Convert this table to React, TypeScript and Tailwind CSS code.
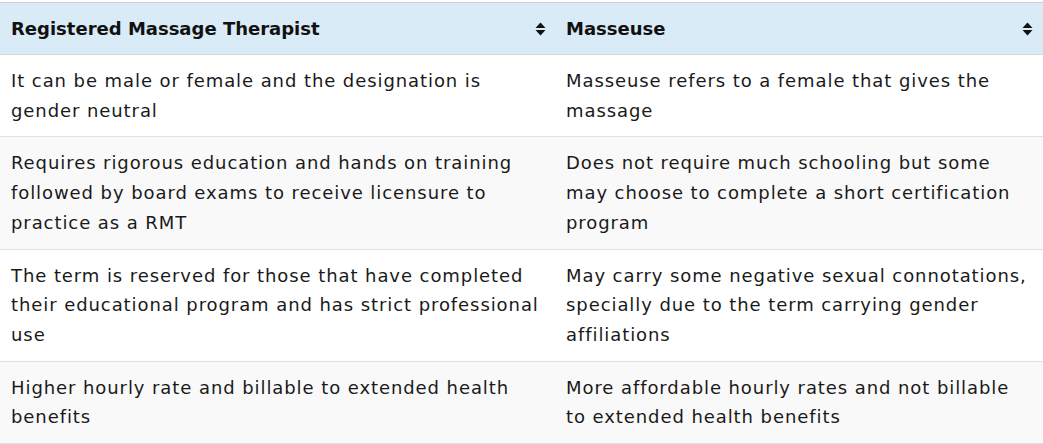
import React from "react";

const rows: [string[], string[]][] = [
  [
    ["It can be male or female and the designation is", "gender neutral"],
    ["Masseuse refers to a female that gives the", "massage"],
  ],
  [
    [
      "Requires rigorous education and hands on training",
      "followed by board exams to receive licensure to",
      "practice as a RMT",
    ],
    [
      "Does not require much schooling but some",
      "may choose to complete a short certification",
      "program",
    ],
  ],
  [
    [
      "The term is reserved for those that have completed",
      "their educational program and has strict professional",
      "use",
    ],
    [
      "May carry some negative sexual connotations,",
      "specially due to the term carrying gender",
      "affiliations",
    ],
  ],
  [
    ["Higher hourly rate and billable to extended health", "benefits"],
    ["More affordable hourly rates and not billable", "to extended health benefits"],
  ],
];

function SortIcon() {
  return (
    <svg width="11" height="14" viewBox="0 0 11 14" className="shrink-0">
      <path d="M5.5 0.5 L10.5 6 L0.5 6 Z" fill="#111" />
      <path d="M5.5 13.5 L10.5 8 L0.5 8 Z" fill="#111" />
    </svg>
  );
}

function Cell({ lines }: { lines: string[] }) {
  return (
    <div className="pl-[11px] pr-[4px] py-[11px] text-[18px] leading-[29.7px] tracking-[0.92px] text-[#1a1a1a] whitespace-nowrap overflow-hidden">
      {lines.map((l, i) => (
        <React.Fragment key={i}>
          {l}
          {i < lines.length - 1 && <br />}
        </React.Fragment>
      ))}
    </div>
  );
}

export default function App() {
  return (
    <div
      className="w-[1043px] h-[444px] overflow-hidden bg-white pt-[2px] text-[#111]"
      style={{ fontFamily: '"DejaVu Sans", "Open Sans", sans-serif' }}
    >
      <div className="border-t border-[#cfcfcf]">
        <div className="grid grid-cols-[555px_1fr] bg-[#d9ebf6] border-b border-[#d6d6d6] h-[52px]">
          <div className="flex items-center justify-between pl-[11px] pr-[9px]">
            <span className="text-[18px] font-bold">Registered Massage Therapist</span>
            <SortIcon />
          </div>
          <div className="flex items-center justify-between pl-[11px] pr-[10px]">
            <span className="text-[18px] font-bold">Masseuse</span>
            <SortIcon />
          </div>
        </div>
        {rows.map((r, i) => (
          <div
            key={i}
            className={`grid grid-cols-[555px_1fr] border-b border-[#e0e0e0] ${i % 2 === 1 ? "bg-[#f9f9f9]" : "bg-white"}`}
          >
            <Cell lines={r[0]} />
            <Cell lines={r[1]} />
          </div>
        ))}
      </div>
    </div>
  );
}
